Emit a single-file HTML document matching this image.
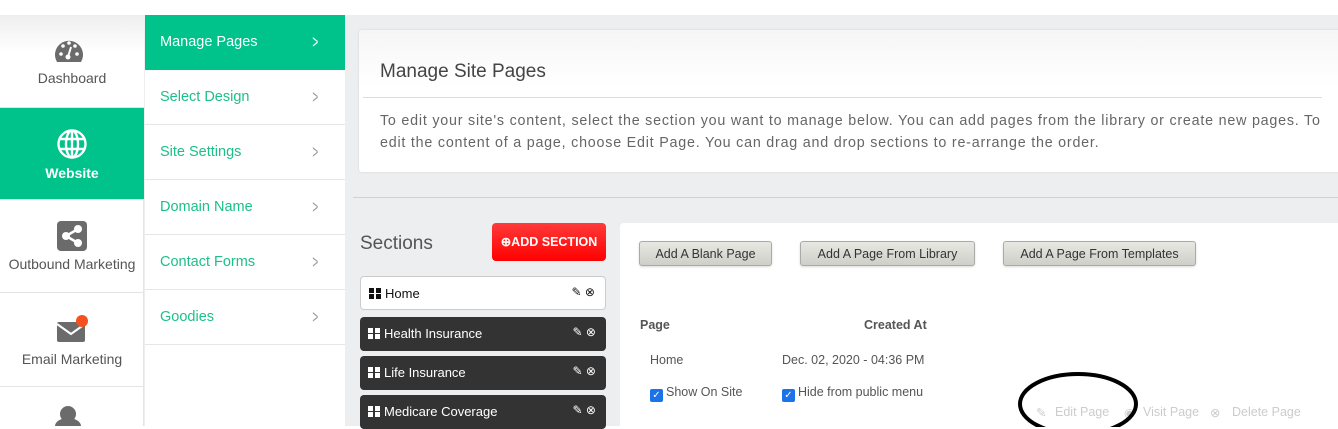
<!DOCTYPE html>
<html><head><meta charset="utf-8"><style>
*{margin:0;padding:0;box-sizing:border-box}
body{width:1338px;height:426px;overflow:hidden;background:#fff;font-family:"Liberation Sans",sans-serif;position:relative}
.abs{position:absolute}
.nav1{left:0;width:144px;text-align:center;color:#555;font-size:14px;border-bottom:1px solid #e4e4e4}
.nav2{left:145px;width:200px;height:55px;border-bottom:1px solid #e6e6e6;color:#1dbf8a;font-size:14.5px;padding:19px 0 0 15px}
.nav2 .ch{position:absolute;left:165px;top:17px;color:#999;font-size:18px;transform:scaleX(.55)}
.sec{left:360px;width:246px;height:34px;border-radius:4px;background:#333;color:#fff;font-size:13px;padding:9px 0 0 8px}
.grid{display:inline-block;width:12px;height:11px;vertical-align:-1px;margin-right:4px;background:
linear-gradient(currentColor,currentColor) 0 0/5px 5px no-repeat,linear-gradient(currentColor,currentColor) 7px 0/5px 5px no-repeat,linear-gradient(currentColor,currentColor) 0 6px/5px 5px no-repeat,linear-gradient(currentColor,currentColor) 7px 6px/5px 5px no-repeat}
.ic{position:absolute;right:10px;top:8px;font-size:12px}
.btn{top:241px;height:25px;border:1px solid #aaa;border-radius:3px;background:linear-gradient(#e8e8e3,#cfcfca);font-size:12.5px;color:#333;text-align:center;padding-top:5px;box-shadow:0 1px 2px rgba(0,0,0,.15)}
.t{font-size:12.5px;color:#555}
.cb{display:inline-block;width:13px;height:13px;background:#1a73e8;border-radius:2px;color:#fff;font-size:10px;text-align:center;line-height:13px;vertical-align:-2px;margin-right:3px}
</style></head><body>
<div class="abs" style="left:0;top:15px;width:1338px;height:411px;background:#eceef0"></div>
<!-- col1 -->
<div class="abs" style="left:0;top:15px;width:144px;height:411px;background:#fff;border-right:1px solid #e4e4e4"></div>
<div class="abs nav1" style="top:15px;height:93px;background:linear-gradient(#eee,#fff 40%)"></div>
<svg class="abs" style="left:53px;top:37px" width="32" height="26" viewBox="0 0 32 26"><path d="M4 25A14 14 0 1 1 28 25Z" fill="#6b6b6b"/><circle cx="8" cy="17" r="1.8" fill="#fff"/><circle cx="10" cy="9" r="1.8" fill="#fff"/><circle cx="16" cy="6" r="1.8" fill="#fff"/><circle cx="22" cy="9" r="1.8" fill="#fff"/><circle cx="24" cy="17" r="1.8" fill="#fff"/><path d="M15 20L18 10" stroke="#fff" stroke-width="2"/><circle cx="15" cy="20" r="2.5" fill="#fff"/></svg>
<div class="abs" style="left:0;top:70px;width:144px;text-align:center;color:#555;font-size:14px">Dashboard</div>
<div class="abs nav1" style="top:108px;height:92px;background:#00c28b;color:#fff;font-weight:bold">
<svg style="margin-top:20px" width="32" height="32" viewBox="0 0 32 32" fill="none" stroke="#fff" stroke-width="2.4"><circle cx="16" cy="16" r="13.5"/><ellipse cx="16" cy="16" rx="6" ry="13.5"/><path d="M3 11H29M3 21H29M16 2V30"/></svg>
<div style="margin-top:2px">Website</div></div>
<div class="abs nav1" style="top:201px;height:92px">
<svg style="margin-top:20px" width="30" height="30" viewBox="0 0 30 30"><rect width="30" height="30" rx="4" fill="#6b6b6b"/><circle cx="21" cy="8" r="4" fill="#fff"/><circle cx="9" cy="15" r="4" fill="#fff"/><circle cx="21" cy="22" r="4" fill="#fff"/><path d="M21 8L9 15L21 22" stroke="#fff" stroke-width="2.5" fill="none"/></svg>
<div style="margin-top:2px">Outbound Marketing</div></div>
<div class="abs nav1" style="top:294px;height:93px">
<svg style="margin-top:20px" width="34" height="30" viewBox="0 0 34 30"><rect x="2" y="8" width="28" height="20" rx="2" fill="#6b6b6b"/><path d="M2 10L16 20L30 10" stroke="#fff" stroke-width="2" fill="none"/><circle cx="27" cy="7" r="6" fill="#f4511e"/></svg>
<div style="margin-top:4px">Email Marketing</div></div>
<svg class="abs" style="left:54px;top:405px" width="28" height="21" viewBox="0 0 28 21"><circle cx="14" cy="9" r="8" fill="#6b6b6b"/><path d="M1 21A13 8 0 0 1 27 21Z" fill="#6b6b6b"/></svg>
<!-- col2 -->
<div class="abs" style="left:145px;top:15px;width:200px;height:411px;background:#fff"></div>
<div class="abs nav2" style="top:15px;background:#00c28b;color:#fff;border:none">Manage Pages<span class="ch" style="color:#fff">&gt;</span></div>
<div class="abs nav2" style="top:70px">Select Design<span class="ch">&gt;</span></div>
<div class="abs nav2" style="top:125px">Site Settings<span class="ch">&gt;</span></div>
<div class="abs nav2" style="top:180px">Domain Name<span class="ch">&gt;</span></div>
<div class="abs nav2" style="top:235px">Contact Forms<span class="ch">&gt;</span></div>
<div class="abs nav2" style="top:290px">Goodies<span class="ch">&gt;</span></div>
<!-- card -->
<div class="abs" style="left:359px;top:30px;width:990px;height:142px;background:linear-gradient(#f6f6f6,#fff 40%);border-radius:3px;box-shadow:0 0 2px rgba(0,0,0,.12)"></div>
<div class="abs" style="left:380px;top:61px;font-size:19px;color:#444">Manage Site Pages</div>
<div class="abs" style="left:363px;top:97px;width:959px;height:1px;background:#ddd"></div>
<div class="abs" style="left:380px;top:110px;width:960px;font-size:14.3px;line-height:22px;color:#666;letter-spacing:.78px;white-space:nowrap">To edit your site's content, select the section you want to manage below. You can add pages from the library or create new pages. To<br>edit the content of a page, choose Edit Page. You can drag and drop sections to re-arrange the order.</div>
<div class="abs" style="left:353px;top:197px;width:985px;height:1px;background:#cfd2cc"></div>
<!-- sections -->
<div class="abs" style="left:360px;top:233px;font-size:19px;color:#555">Sections</div>
<div class="abs" style="left:492px;top:223px;width:114px;height:38px;border-radius:4px;background:linear-gradient(#ff3a3a,#f00);color:#fff;font-weight:bold;font-size:12.5px;padding-top:11px;text-align:center">⊕ADD SECTION</div>
<div class="abs sec" style="top:276px;background:#fff;color:#111;border:1px solid #ccc">
<span class="grid"></span>Home<span class="ic">✎ ⊗</span></div>
<div class="abs sec" style="top:317px"><span class="grid"></span>Health Insurance<span class="ic">✎ ⊗</span></div>
<div class="abs sec" style="top:356px"><span class="grid"></span>Life Insurance<span class="ic">✎ ⊗</span></div>
<div class="abs sec" style="top:395px"><span class="grid"></span>Medicare Coverage<span class="ic">✎ ⊗</span></div>
<!-- pages panel -->
<div class="abs" style="left:620px;top:223px;width:718px;height:203px;background:#fff;border-radius:4px 0 0 0"></div>
<div class="abs btn" style="left:639px;width:133px">Add A Blank Page</div>
<div class="abs btn" style="left:800px;width:175px">Add A Page From Library</div>
<div class="abs btn" style="left:1003px;width:193px">Add A Page From Templates</div>
<div class="abs t" style="left:640px;top:318px;font-weight:bold">Page</div>
<div class="abs t" style="left:864px;top:318px;font-weight:bold">Created At</div>
<div class="abs t" style="left:650px;top:353px">Home</div>
<div class="abs t" style="left:782px;top:353px">Dec. 02, 2020 - 04:36 PM</div>
<div class="abs t" style="left:650px;top:385px"><span class="cb">✓</span>Show On Site</div>
<div class="abs t" style="left:782px;top:385px"><span class="cb">✓</span>Hide from public menu</div>
<div class="abs t" style="left:1036px;top:405px;color:#ccc">✎</div>
<div class="abs t" style="left:1055px;top:405px;color:#ccc">Edit Page</div>
<div class="abs t" style="left:1124px;top:405px;color:#ccc">◉</div>
<div class="abs t" style="left:1143px;top:405px;color:#ccc">Visit Page</div>
<div class="abs t" style="left:1210px;top:405px;color:#ccc">⊗</div>
<div class="abs t" style="left:1232px;top:405px;color:#ccc">Delete Page</div>
<svg class="abs" style="left:1017px;top:366px" width="125" height="61"><ellipse cx="61" cy="38" rx="58" ry="30" fill="none" stroke="#000" stroke-width="4"/></svg>
</body></html>
